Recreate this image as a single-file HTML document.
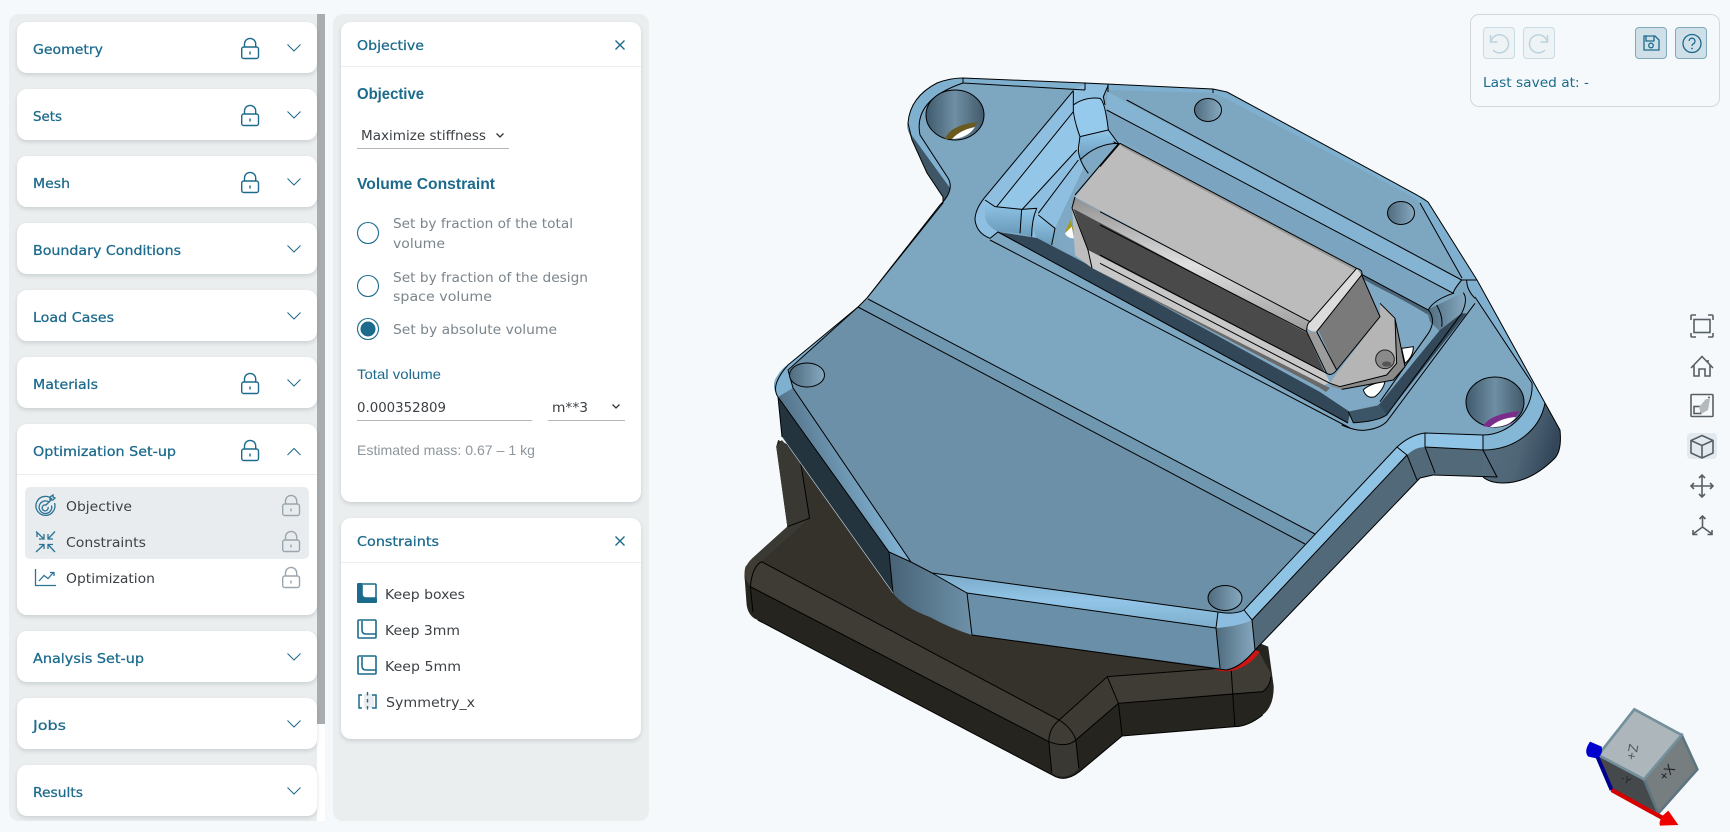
<!DOCTYPE html>
<html lang="en"><head><meta charset="utf-8"><title>Optimization Set-up</title>
<style>
html,body{margin:0;padding:0;width:1730px;height:832px;overflow:hidden;background:#f6f9fb}
.a{position:absolute}
.panel{background:#ebeeef;border-radius:10px}
.card{background:#fff;border-radius:10px;box-shadow:0 2px 4px rgba(60,70,80,.18);left:17px;width:300px;height:51px}
.div{background:#ebeeef;height:1px}
svg.full{position:absolute;left:0;top:0;width:1730px;height:832px}
text{font-family:"DejaVu Sans","Liberation Sans",sans-serif;font-size:13px}
.t{fill:#1c6a8c;stroke:#1c6a8c;stroke-width:.25}
.d{fill:#3c4146}
.g{fill:#7b858c}
.e{fill:#1c6a8c;font-family:"Liberation Sans",sans-serif;font-size:16px;font-weight:bold}
.l{fill:none;stroke:#000;stroke-width:1}
.l *{vector-effect:non-scaling-stroke}
</style></head><body>

<!-- 3D model -->
<svg class="full" viewBox="0 0 1730 832">
<defs>
<linearGradient id="hole" x1="0" x2="1"><stop offset="0" stop-color="#3f5a6d"/><stop offset=".5" stop-color="#6f8fa4"/><stop offset="1" stop-color="#42596a"/></linearGradient>
<linearGradient id="hole2" x1="0" x2="1"><stop offset="0" stop-color="#4f6b7e"/><stop offset="1" stop-color="#86a9c0"/></linearGradient>
<linearGradient id="curve" x1="0" x2="1"><stop offset="0" stop-color="#486276"/><stop offset="1" stop-color="#6d91a9"/></linearGradient>
<linearGradient id="ear" x1="0" x2="1" y1="0" y2=".3"><stop offset="0" stop-color="#566e80"/><stop offset=".6" stop-color="#4f6677"/><stop offset="1" stop-color="#34475a"/></linearGradient>
<linearGradient id="band" x1="0" x2="0" y1="0" y2="1"><stop offset="0" stop-color="#7aa8c6"/><stop offset=".5" stop-color="#92c5e8"/><stop offset="1" stop-color="#7eaecb"/></linearGradient>
<linearGradient id="lb" x1="0" x2="1" y1=".4" y2="0"><stop offset="0" stop-color="#4a6477"/><stop offset=".6" stop-color="#7fb0d0"/><stop offset="1" stop-color="#8cbde0"/></linearGradient>
<linearGradient id="pk" x1="0" x2="0" y1="0" y2="1"><stop offset="0" stop-color="#93c8ea"/><stop offset="1" stop-color="#6a9bbb"/></linearGradient>
<linearGradient id="gb" x1="0" x2="0" y1="0" y2="1"><stop offset="0" stop-color="#8f8f8f"/><stop offset=".5" stop-color="#e0e0e0"/><stop offset="1" stop-color="#9a9a9a"/></linearGradient>
</defs>

<!-- dark base -->
<g transform="translate(730,420) scale(.36989,.33333)">
<path d="M130,60 L125,80 L155,320 L60,415 Q35,440 40,480 L45,555 Q50,590 75,600 L880,1070 Q910,1085 945,1055 L1060,948 L1365,920 Q1400,920 1440,885 Q1470,860 1470,800 L1455,680 L600,300 Z" fill="#25241f"/>
<path d="M125,80 L140,60 L190,120 L215,295 L155,320 Z" fill="#3a3832"/>
<path d="M190,120 L215,295 L85,425 L890,900 L1020,770 L1320,745 L655,645 L440,520 Z" fill="#35322c"/>
<path d="M155,320 L215,295 L85,425 L60,415 Z" fill="#3b3933"/>
<path d="M60,415 L85,425 L890,900 Q925,925 935,960 Q910,985 862,965 L55,500 Q33,470 42,440 Z" fill="#3f3c35"/>
<path d="M890,900 L1020,770 L1050,850 L935,960 Q925,925 890,900 Z" fill="#3c3a33"/>
<path d="M1020,770 L1320,745 L1350,755 L1430,695 L1462,760 Q1465,800 1440,815 L1355,820 L1050,850 Z" fill="#3f3c35"/>
<path d="M862,965 Q910,985 935,960 L943,1045 Q910,1085 870,1060 Z" fill="#3a3832"/>
<g class="l">
<path d="M85,425 L890,900 Q925,925 935,960 Q910,985 862,965 L55,500"/>
<path d="M85,425 Q60,440 55,500 L62,575"/>
<path d="M890,900 Q862,925 862,965 L870,1060 M935,960 L943,1045"/>
<path d="M890,900 L1020,770 L1050,850 L935,960 M1050,850 L1060,945"/>
<path d="M1020,770 L1320,745 M1050,850 L1440,815 Q1460,800 1462,770 M1355,750 L1365,920"/>
<path d="M190,120 L215,295 L155,320"/>
<path d="M75,600 L880,1070 Q910,1085 945,1055 L1060,948 L1365,920 Q1400,920 1440,885"/>
</g>
<path d="M1310,748 Q1350,765 1395,735 Q1420,718 1432,695 L1420,690 L1340,746 Z" fill="#d01515"/>
</g>

<!-- plate silhouette (walls) -->
<path d="M963,78 L1085,83 L1213,89 L1227,92 L1417,195 Q1425,198 1428,202 L1477,280 L1545,403 L1560,430 Q1562,450 1555,458 Q1530,483 1503,483 Q1490,483 1483,477 L1433,475 L1420,478 L1255,650 Q1240,668 1226,670 L972,635 Q950,628 930,617 Q905,608 893,593 L782,437 L778,397 Q770,385 778,375 Q782,368 788,365 L858,307 L867,298 L943,203 L943,197 L927,173 L912,140 Q905,125 908,123 Q910,97 937,83 Q950,78 963,78 Z" fill="#52697a"/>
<path d="M1483,450 C1515,450 1540,430 1545,403 L1560,430 Q1562,450 1555,458 Q1530,483 1503,483 Q1490,483 1483,477 Z" fill="url(#ear)"/>
<path d="M913,137 L950,188 L943,203 L943,197 L927,173 L912,140 Z" fill="#3f5666"/>
<path d="M778,397 L782,437 L893,593 L889,552 Z" fill="#24343f"/>
<path d="M889,552 L911,562 L967,593 L972,635 Q950,628 930,617 Q905,608 893,593 Z" fill="url(#curve)"/>
<path d="M967,593 L1216,628 L1220,668 L972,635 Z" fill="#6a8fa8"/>
<path d="M1216,628 L1252,620 L1255,650 Q1240,668 1226,670 L1220,668 Z" fill="url(#hole2)"/>

<!-- fillet silhouette -->
<path d="M963,78 L1085,83 L1213,89 L1227,92 L1417,195 Q1425,198 1428,202 L1477,280 L1545,403 C1540,430 1515,450 1483,450 L1425,447 Q1415,447 1407,455 L1252,620 L1216,628 L967,593 L911,562 L889,552 L778,397 Q770,385 778,375 Q782,368 788,365 L858,307 L867,298 L943,203 Q953,193 950,188 L913,137 Q905,125 908,123 Q910,97 937,83 Q950,78 963,78 Z" fill="#7fb0d0"/>
<path d="M793,388 L911,562 L889,552 L778,397 Z" fill="url(#lb)"/>
<path d="M932,573 L1218,612 L1216,628 L967,593 Z" fill="url(#band)"/>
<path d="M1218,612 Q1235,615 1244,610 L1252,620 Q1240,626 1216,628 Z" fill="#8cbde0"/>
<path d="M1397,447 L1407,455 L1252,620 L1244,610 Z" fill="#8fc3e4"/>
<path d="M1425,433 L1483,435 L1483,450 L1425,447 Q1415,447 1407,455 L1397,447 Q1410,435 1425,433 Z" fill="#90c4e6"/>
<path d="M1532,383 L1545,403 C1540,430 1515,450 1483,450 L1483,435 C1510,435 1534,410 1532,383 Z" fill="#84b6d6"/>

<!-- top face -->
<path d="M963,83 L1085,90 L1108,90 L1213,93 L1225,98 L1415,198 L1420,203 L1462,278 L1475,297 L1532,383 C1534,410 1510,435 1483,435 L1425,433 Q1410,435 1397,447 L1244,610 Q1235,615 1218,612 L932,573 L911,562 L793,388 L788,370 L858,307 L867,298 L940,205 Q955,190 948,178 L920,135 Q913,100 963,83 Z" fill="#7da6c1"/>
<!-- dark section -->
<path d="M868,299 L1315,534 L1305,544 L1244,610 Q1235,615 1218,612 L932,573 L911,562 L793,388 L788,370 L858,307 Z" fill="#7097b0"/>
<path d="M858,307 L1305,544 L1244,610 Q1235,615 1218,612 L932,573 L911,562 L793,388 L788,370 Z" fill="#6c90a7"/>

<!-- upper/right bands -->
<path d="M1108,92 L1460,280 L1453,293 L1105,110 Z" fill="#85b4d3"/>
<path d="M1105,110 L1453,293 L1428,310 L1113,142 Z" fill="#7aa4bf"/>

<!-- pocket floor -->
<path d="M1060,175 L1115,137 L1428,310 L1428,333 L1380,402 L1350,412 L1083,262 Z" fill="#7ea8c3"/>

<!-- pocket: zoom-8 coordinates -->
<g transform="translate(730,60) scale(.33333)">
<path d="M1030,92 L1065,72 L1135,75 L1120,110 L1125,135 L1135,210 L1165,250 L1100,260 L1050,300 L1060,320 L975,505 L965,555 L920,535 L905,530 L870,520 L805,515 L780,535 Q740,520 735,480 Q735,450 762,415 Z" fill="#8ebfe0"/>
<path d="M1030,150 L1040,150 L1045,265 L875,448 L795,440 Z" fill="#93c6e7"/>
<path d="M1030,135 L1065,115 L1110,115 L1125,135 L1135,210 L1050,230 Z" fill="#96caec"/>
<path d="M1050,230 L1135,210 L1165,250 L1100,260 L1050,300 Z" fill="url(#pk)"/>
<path d="M765,420 L795,440 L875,448 L870,520 L805,515 Q770,500 765,470 Z" fill="url(#pk)"/>
<path d="M875,448 L920,445 L905,500 L905,530 L870,520 Z" fill="url(#pk)"/>
<path d="M905,500 L925,465 L975,505 L965,555 L920,535 Z" fill="url(#pk)"/>
<path d="M925,460 L1045,300 L1060,325 L975,505 Z" fill="#8ebfe0"/>
<path d="M975,505 L1060,325 L1080,270 L1170,250 L1030,420 L1050,590 L1000,570 Z" fill="#7ea8c3"/>
<path d="M1005,515 L1022,480 L1030,510 Z" fill="#a89a1c"/>
<path d="M1005,520 L1025,500 L1032,535 Q1012,535 1005,520 Z" fill="#fff"/>
<g class="l">
<path d="M1030,92 L762,415 Q735,450 735,480 Q740,520 780,535"/>
<path d="M1030,155 L800,440 M1040,270 L875,450"/>
<path d="M1030,92 L1030,155 M1030,135 Q1065,110 1110,115 Q1125,125 1135,210 L1050,230 Q1035,190 1030,155 M1050,230 L1045,265 Q1045,300 1075,340"/>
<path d="M1135,75 L1120,110 L1125,135 M1135,210 L1165,250 Q1100,250 1050,300"/>
<path d="M765,420 L795,440 L875,448 L870,520 M875,448 L920,445 Q905,480 905,530 M925,465 L975,505 L965,555 M1045,300 L925,460"/>
<path d="M780,535 L805,515"/>
</g>
</g>

<!-- pocket right end: zoom-9 coordinates -->
<g transform="translate(1100,100) scale(.33333)">
<path d="M40,125 L985,630 L985,645 Q930,610 830,560 L60,135 Z" fill="#4a6375"/>
<path d="M980,630 L1090,578 Q1105,600 1085,640 L1020,695 L990,665 Z" fill="url(#hole2)"/>
<path d="M1085,640 L1100,640 L860,945 Q830,965 760,970 L750,935 Q820,935 840,910 L1020,690 Z" fill="#33495a"/>
<path d="M790,870 Q810,850 855,845 Q850,870 825,890 Q800,898 790,870 Z" fill="#fff" stroke="#000" stroke-width="3"/>
<path d="M905,745 L940,740 Q940,770 915,790 Z" fill="#fff" stroke="#000" stroke-width="3"/>
</g>
<!-- long dark shadow strip -->
<path d="M998,232 L1037,238 L1060,250 L1083,262 L1320,392 L1350,412 L1348,423 Z" fill="#324758"/>
<g transform="translate(1100,100) scale(.33333)">
<path d="M745,935 L840,915 L860,945 Q830,965 760,968 Z" fill="#3b5466"/>
<g class="l">
<path d="M80,0 L1085,540 M20,30 L1060,580 Q1000,600 985,630 M40,125 L985,630 Q1010,660 985,700 L840,905"/>
<path d="M1010,615 Q1030,650 1025,680 M1090,578 Q1105,600 1085,640 L860,945 Q830,965 760,968 L745,935"/>
<path d="M1125,595 Q1100,570 1100,540 M1085,540 L1130,540 M1085,540 Q1060,570 1060,580"/>
<path d="M725,975 Q770,995 800,990 Q840,985 860,965 L1125,610"/>
</g>
</g>
<path class="l" d="M990,240 L1350,428 M998,232 L1348,423"/>

<!-- gray box -->
<path d="M1119,143 L1357,268 L1310,322 L1075,197 Z" fill="#bcbcbc"/>
<path d="M1119,143 L1357,268 L1362,274 L1122,147 Z" fill="#9a9a9a"/>
<path d="M1073,197 L1310,322 L1307,333 L1072,208 Z" fill="url(#gb)"/>
<path d="M1072,208 L1307,333 L1325,373 L1088,250 Z" fill="#4a4a4a"/>
<path d="M1075,255 L1088,250 L1325,373 L1330,382 L1320,388 L1092,268 Z" fill="#c8c8c8"/>
<path d="M1072,205 L1075,255 L1092,268 L1088,250 Z" fill="#bdbdbd"/>
<path d="M1092,268 L1320,388 L1326,392 L1330,388 L1100,272 Z" fill="#6a6a6a"/>
<g transform="translate(1100,100) scale(.33333)">
<path d="M840,610 L885,655 L915,800 L880,840 L725,868 L695,860 L690,850 L710,820 L840,650 Z" fill="#8a8a8a"/>
<path d="M840,610 L885,655 L885,730 L890,790 L860,825 L720,860 L690,850 L710,820 L840,650 Z" fill="#b5b5b5"/>
<path d="M775,530 L785,525 L840,650 L710,810 L655,690 Z" fill="#7a7a7a"/>
<path d="M630,665 L770,505 L785,525 L650,695 Q625,695 620,680 Z" fill="#dcdcdc"/>
<path d="M620,695 L650,695 L710,810 Q700,825 680,820 Z" fill="#9c9c9c"/>
<circle cx="855" cy="778" r="28" fill="#8a8a8a" stroke="#222" stroke-width="3"/>
<ellipse cx="860" cy="792" rx="14" ry="8" fill="#555"/>
<g class="l">
<path d="M60,130 L770,505 Q790,510 785,525 L840,650 L710,810 Q695,830 680,820 L620,695 Q620,670 630,665 L770,505"/>
<path d="M0,335 L630,665 M0,375 L620,695 M650,695 L710,810 M650,695 L785,525"/>
<path d="M0,465 L680,820 M0,490 L690,850 M840,610 L885,655 L890,790 L860,825 L720,860 L690,850 M725,868 L880,840 L915,800 L885,655"/>
<path d="M60,130 L0,200"/>
</g>
</g>
<path class="l" d="M1075,195 L1119,143 M1075,197 L1072,208 L1088,250 L1092,268"/>

<!-- plate feature lines -->
<g class="l">
<path d="M868,299 L1315,534 M858,307 L1305,544"/>
<path d="M963,78 L1085,83 L1213,89 L1227,92 L1417,195 L1428,202 L1477,280 L1545,403 M963,83 L1085,90 M963,78 L963,83 M1085,83 L1085,90 M1108,84 L1108,92 M1213,89 L1213,93"/>
<path d="M1420,203 L1462,278 M1475,297 L1532,383 C1534,410 1510,435 1483,435 L1425,433 Q1410,435 1397,447 L1244,610"/>
<path d="M1425,447 L1483,450 C1515,450 1540,430 1545,403 M1425,433 L1425,447 M1483,435 L1483,450 M1397,447 L1407,455 L1252,620"/>
<path d="M1407,455 L1417,480 M1425,447 L1435,473 M1483,450 L1497,477 L1433,475"/>
<path d="M963,83 Q913,100 920,135 L948,178 Q955,190 940,205 L867,298 L858,307 L788,370 L793,388 L911,562 L932,573 L1218,612 Q1235,615 1244,610"/>
<path d="M963,78 Q950,78 937,83 Q910,97 908,123 L912,140 L927,173 L943,197 L943,203 L867,298"/>
<path d="M788,365 L858,307 M788,365 Q770,385 778,397 M778,397 L889,552 L893,593 M778,397 L782,437"/>
<path d="M932,573 L967,593 L1216,628 M967,593 L972,635 M1218,612 L1216,628 L1220,668 M1244,610 L1252,620 L1255,650"/>
<path d="M889,552 L911,562"/>
<path d="M1483,477 Q1490,483 1503,483 Q1530,483 1555,458 Q1562,450 1560,430 L1545,403"/>
<path d="M972,635 L1226,670 Q1240,668 1255,650 L1420,478 L1433,475"/>
</g>
<path d="M782,437 L893,593" stroke="#cfe2ef" stroke-width=".6" fill="none"/>

<!-- holes -->
<g stroke="#000" stroke-width="1">
<ellipse cx="955" cy="115" rx="29" ry="25" fill="url(#hole)"/>
<ellipse cx="1208" cy="110" rx="13.500" ry="11.500" fill="url(#hole2)"/>
<ellipse cx="1401" cy="213" rx="13.500" ry="11.500" fill="url(#hole2)"/>
<ellipse cx="807" cy="375" rx="17.500" ry="12" fill="url(#hole2)"/>
<ellipse cx="1225" cy="598" rx="17" ry="12.500" fill="url(#hole2)"/>
<ellipse cx="1495" cy="402" rx="29" ry="25" fill="url(#hole)"/>
</g>
<path d="M945,139 Q950,125 978,122 L968,134 Q955,140 945,139 Z" fill="#6a5a20"/>
<path d="M952,139 Q960,130 975,127 Q968,138 952,139 Z" fill="#fff"/>
<path d="M1483,426 Q1490,414 1520,411 L1510,424 Q1495,429 1483,426 Z" fill="#7a2d8a"/>
<path d="M1490,427 Q1500,418 1516,417 Q1508,428 1490,427 Z" fill="#fff"/>

<!-- view cube -->
<g transform="translate(1570,690) scale(.33333)">
<path d="M85,195 L222,268 L265,370 L125,300 Z" fill="#45494b" stroke="#5d7580" stroke-width="4"/>
<path d="M335,135 L382,238 L265,370 L222,268 Z" fill="#767e7f" stroke="#5d7580" stroke-width="8"/>
<path d="M193,58 L335,135 L222,268 L85,195 Z" fill="#adb6ba" stroke="#74909c" stroke-width="8"/>
<path d="M125,300 L80,195" stroke="#00008f" stroke-width="12"/>
<path d="M60,155 L95,170 Q100,195 80,205 L55,200 Q40,185 60,155 Z" fill="#0000d0"/>
<path d="M125,300 L280,385" stroke="#d40000" stroke-width="13"/>
<path d="M295,362 L325,405 L270,407 Q265,395 280,375 Z" fill="#ee0000"/>
<text transform="translate(178,160) rotate(100)" style="font-size:40px;font-family:'Liberation Sans',sans-serif" fill="#555">Z+</text>
<text transform="translate(285,275) rotate(-50)" style="font-size:40px;font-family:'Liberation Sans',sans-serif" fill="#222">+X</text>
<text transform="translate(150,270) rotate(30)" style="font-size:30px;font-family:'Liberation Sans',sans-serif" fill="#222">-Y</text>
</g>
</svg>

<!-- left panel -->
<div class="a panel" style="left:9px;top:14px;width:316px;height:807px"></div>
<div class="a" style="left:317px;top:14px;width:8px;height:807px;background:#fff"></div>
<div class="a" style="left:317px;top:14px;width:8px;height:710px;background:#a9adb0"></div>
<div class="a card" style="top:22px"></div>
<div class="a card" style="top:89px"></div>
<div class="a card" style="top:156px"></div>
<div class="a card" style="top:223px"></div>
<div class="a card" style="top:290px"></div>
<div class="a card" style="top:357px"></div>
<div class="a card" style="top:424px;height:191px"></div>
<div class="a div" style="left:17px;top:474px;width:300px"></div>
<div class="a" style="left:25px;top:487px;width:284px;height:36px;background:#e9ecee;border-radius:5px 5px 0 0"></div>
<div class="a" style="left:25px;top:523px;width:284px;height:36px;background:#e9ecee;border-radius:0 0 5px 5px"></div>
<div class="a card" style="top:631px"></div>
<div class="a card" style="top:698px"></div>
<div class="a card" style="top:765px"></div>

<!-- middle panel -->
<div class="a panel" style="left:333px;top:14px;width:316px;height:807px"></div>
<div class="a card" style="left:341px;top:22px;height:480px"></div>
<div class="a div" style="left:341px;top:66px;width:300px"></div>
<div class="a card" style="left:341px;top:518px;height:221px"></div>
<div class="a div" style="left:341px;top:562px;width:300px"></div>

<!-- top right box -->
<div class="a" style="left:1470px;top:14px;width:248px;height:91px;border:1px solid #d0d8dc;border-radius:9px"></div>
<div class="a" style="left:1483px;top:27px;width:30px;height:30px;background:#eef3f6;border:1px solid #c9dbe3;border-radius:4px"></div>
<div class="a" style="left:1523px;top:27px;width:30px;height:30px;background:#eef3f6;border:1px solid #c9dbe3;border-radius:4px"></div>
<div class="a" style="left:1635px;top:27px;width:30px;height:30px;background:#d0e0e8;border:1px solid #7fa9bc;border-radius:4px"></div>
<div class="a" style="left:1675px;top:27px;width:30px;height:30px;background:#d0e0e8;border:1px solid #7fa9bc;border-radius:4px"></div>
<div class="a" style="left:1687px;top:433px;width:30px;height:26px;background:#e2eaf0;border-radius:4px"></div>

<!-- text and icons -->
<svg class="full" viewBox="0 0 1730 832">
<defs>
<g id="lk" fill="none" stroke-width="1.4"><rect x="241.7" y="47" width="16.8" height="11.5" rx="2"/><path d="M244.5,47 V44 a5.6,5.6 0 0 1 11.2,0 V47"/><path d="M250,51.5 V54.5"/></g>
<path id="dn" d="M287.5,44.5 L294,51 L300.5,44.5" fill="none" stroke="#1c6a8c" stroke-width="1"/>
<g id="x" fill="none" stroke="#1c6a8c" stroke-width="1.4"><path d="M615.5,40.5 L624.5,49.5 M624.5,40.5 L615.5,49.5"/></g>
<g id="keep" fill="none" stroke="#1c6a8c" stroke-width="1.6"><rect x="358" y="584" width="18" height="18" rx="1"/><path d="M362,585 V594 Q362,598 366,598 H376"/></g>
</defs>
<g class="t">
<text x="33" y="54" textLength="70" lengthAdjust="spacingAndGlyphs">Geometry</text>
<text x="33" y="121" textLength="29" lengthAdjust="spacingAndGlyphs">Sets</text>
<text x="33" y="188" textLength="37" lengthAdjust="spacingAndGlyphs">Mesh</text>
<text x="33" y="255" textLength="148" lengthAdjust="spacingAndGlyphs">Boundary Conditions</text>
<text x="33" y="322" textLength="81" lengthAdjust="spacingAndGlyphs">Load Cases</text>
<text x="33" y="389" textLength="65" lengthAdjust="spacingAndGlyphs">Materials</text>
<text x="33" y="456" textLength="143" lengthAdjust="spacingAndGlyphs">Optimization Set-up</text>
<text x="33" y="663" textLength="111" lengthAdjust="spacingAndGlyphs">Analysis Set-up</text>
<text x="33" y="730" textLength="33" lengthAdjust="spacingAndGlyphs">Jobs</text>
<text x="33" y="797" textLength="50" lengthAdjust="spacingAndGlyphs">Results</text>
<text x="357" y="50" textLength="67" lengthAdjust="spacingAndGlyphs">Objective</text>
<text x="357" y="546" textLength="82" lengthAdjust="spacingAndGlyphs">Constraints</text>
</g>
<g stroke="#1c6a8c">
<use href="#lk"/><use href="#lk" y="67"/><use href="#lk" y="134"/><use href="#lk" y="335"/><use href="#lk" y="402"/>
</g>
<g stroke="#9aa5ad">
<use href="#lk" x="41" y="457"/><use href="#lk" x="41" y="493"/><use href="#lk" x="41" y="529"/>
</g>
<use href="#dn"/><use href="#dn" y="67"/><use href="#dn" y="134"/><use href="#dn" y="201"/><use href="#dn" y="268"/><use href="#dn" y="335"/>
<path d="M287.5,455 L294,448.5 L300.5,455" fill="none" stroke="#1c6a8c" stroke-width="1"/>
<use href="#dn" y="609"/><use href="#dn" y="676"/><use href="#dn" y="743"/>

<g class="d">
<text x="66" y="511" textLength="66" lengthAdjust="spacingAndGlyphs">Objective</text>
<text x="66" y="547" textLength="80" lengthAdjust="spacingAndGlyphs">Constraints</text>
<text x="66" y="583" textLength="89" lengthAdjust="spacingAndGlyphs">Optimization</text>
<text x="361" y="140" textLength="125" lengthAdjust="spacingAndGlyphs">Maximize stiffness</text>
<text x="357" y="412" textLength="89" lengthAdjust="spacingAndGlyphs">0.000352809</text>
<text x="552" y="412" textLength="36" lengthAdjust="spacingAndGlyphs">m**3</text>
<text x="385" y="599" textLength="80" lengthAdjust="spacingAndGlyphs">Keep boxes</text>
<text x="385" y="635" textLength="75" lengthAdjust="spacingAndGlyphs">Keep 3mm</text>
<text x="385" y="671" textLength="76" lengthAdjust="spacingAndGlyphs">Keep 5mm</text>
<text x="386" y="707" textLength="89" lengthAdjust="spacingAndGlyphs">Symmetry_x</text>
</g>
<text class="e" x="357" y="99" textLength="67" lengthAdjust="spacingAndGlyphs">Objective</text>
<text class="e" x="357" y="189" textLength="138" lengthAdjust="spacingAndGlyphs">Volume Constraint</text>
<g class="g">
<text x="393" y="228" textLength="180" lengthAdjust="spacingAndGlyphs">Set by fraction of the total</text>
<text x="393" y="248" textLength="52" lengthAdjust="spacingAndGlyphs">volume</text>
<text x="393" y="282" textLength="195" lengthAdjust="spacingAndGlyphs">Set by fraction of the design</text>
<text x="393" y="301" textLength="99" lengthAdjust="spacingAndGlyphs">space volume</text>
<text x="393" y="334" textLength="164" lengthAdjust="spacingAndGlyphs">Set by absolute volume</text>
</g>
<text x="357" y="379" textLength="84" lengthAdjust="spacingAndGlyphs" style="font-family:'Liberation Sans',sans-serif;font-size:14px" fill="#1c6a8c">Total volume</text>
<text x="357" y="455" textLength="178" lengthAdjust="spacingAndGlyphs" style="font-family:'Liberation Sans',sans-serif;font-size:14px" fill="#8d969c">Estimated mass: 0.67 – 1 kg</text>
<text x="1483" y="87" textLength="106" lengthAdjust="spacingAndGlyphs" fill="#1c6a8c">Last saved at: -</text>

<use href="#x"/><use href="#x" y="496"/>
<path d="M357,148.500 H509 M357,420.500 H532 M548,420.500 H625" stroke="#b4b8bb" stroke-width="1" fill="none"/>
<path d="M496.500,133.500 L500,137 L503.500,133.500 M612.500,404.500 L616,408 L619.500,404.500" stroke="#333" stroke-width="1.300" fill="none"/>
<g fill="#fff" stroke="#1c6a8c" stroke-width="1.100">
<circle cx="368" cy="233" r="10.500"/><circle cx="368" cy="286" r="10.500"/><circle cx="368" cy="329" r="10.500"/>
</g>
<circle cx="368" cy="329" r="7.500" fill="#1c6a8c"/>

<!-- sub item icons -->
<g fill="none" stroke="#2a7396" stroke-width="1.300">
<path d="M52,499 A9.500,9.500 0 1 0 54.500,503"/><path d="M49,502 A6.300,6.300 0 1 0 51.500,505.500"/><path d="M46,505 A3,3 0 1 0 48,507"/>
<path d="M45.500,505.500 L52,499 M50,497 L50,500 L53,500 L55,498 L53,497 L53,495 Z"/>
<path d="M36,531.500 L44,539 M37,537 V533 M44,534 V539 H39 M55,531.500 L48,539 M48,534 V539 H53 M36,552 L44,544.500 M39,544.500 H44 V549 M55,552 L48,544.500 M48,549 V544.500 H53"/>
<path d="M35.500,569 V585.500 H56 M39,581 L44,575.500 L48,578.500 L53,573 M50,572.500 H54 V576"/>
</g>
<use href="#keep"/><use href="#keep" y="36"/><use href="#keep" y="72"/>
<path d="M357,584 a1,1 0 0 1 1,-1 H362 V593 Q362,598 367,598 H377 V602 a1,1 0 0 1 -1,1 H358 a1,1 0 0 1 -1,-1 Z M362,583 V593" fill="#1c6a8c"/>
<rect x="364" y="694" width="10" height="14" fill="#eaedef"/>
<path d="M362,695 H359 V708 H362 M372,695 H376 V708 H372" fill="none" stroke="#1c6a8c" stroke-width="1.500"/>
<path d="M367.500,692 V712" fill="none" stroke="#1c6a8c" stroke-width="1.400" stroke-dasharray="3.500 3.500"/>

<!-- top buttons -->
<g fill="none" stroke="#bcd3de" stroke-width="1.500">
<path d="M1491,41 A9,9 0 1 1 1493,50"/><path d="M1490.500,35 V42 H1497.500"/>
<path d="M1547,41 A9,9 0 1 0 1545,50"/><path d="M1547.500,35 V42 H1540.500"/>
</g>
<g fill="none" stroke="#1c6a8c" stroke-width="1.300">
<path d="M1644,36 H1655 L1659,40 V50 H1644 Z"/><path d="M1646,36.500 V41 H1654 V36.500"/><circle cx="1651" cy="45.500" r="2.300"/>
<circle cx="1692" cy="43.500" r="9"/><path d="M1689,41 A3,3 0 1 1 1693,44 Q1692,44.700 1692,46"/>
</g>
<circle cx="1692" cy="48.500" r=".9" fill="#1c6a8c"/>

<!-- right toolbar -->
<g fill="none" stroke="#565f65" stroke-width="1.600">
<rect x="1694" y="319.500" width="16" height="13"/>
<path d="M1691,320 V316 Q1691,315 1692,315 H1696 M1708,315 H1712 Q1713,315 1713,316 V320 M1713,333 V336 Q1713,337 1712,337 H1708 M1696,337 H1692 Q1691,337 1691,336 V333"/>
<path d="M1691,368 L1702,356.500 L1713,368 M1694,365 V376 H1699 V369 H1705 V376 H1710 V365 M1708,360 V362"/>
<rect x="1691" y="394.500" width="22" height="22" rx="1"/>
<rect x="1694" y="406.500" width="7" height="7"/>
<path d="M1702,435.500 L1713,440.500 V453 L1702,458 L1691,453 V440.500 Z M1691,440.500 L1702,445.500 L1713,440.500 M1702,445.500 V458"/>
<path d="M1702,475 V497 M1691,486 H1713 M1699,478 L1702,475 L1705,478 M1699,494 L1702,497 L1705,494 M1694,483 L1691,486 L1694,489 M1710,483 L1713,486 L1710,489"/>
<path d="M1702.500,516 V527 L1693,534 M1702.500,527 L1712,534 M1699.500,519 L1702.500,516 L1705.500,519 M1693,530 V534.500 H1697.500 M1712,530 V534.500 H1707.500"/>
</g>
<path d="M1699,407 L1706,399 H1710 L1708,410 L1701,414 Z" fill="#b4b9bc"/>
<circle cx="1709" cy="397.500" r="1" fill="#565f65"/>
</svg>
</body></html>
